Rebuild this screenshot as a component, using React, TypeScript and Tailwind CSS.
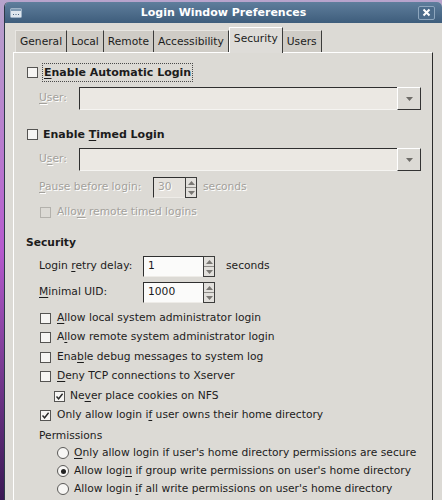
import React from 'react';

type Kids = { children: React.ReactNode };

// mnemonic letter
function U({ children }: Kids) {
  return <span className="underline decoration-1 underline-offset-[2px]">{children}</span>;
}

function Checkbox({ checked = false, off = false }: { checked?: boolean; off?: boolean }) {
  return (
    <div
      className={`flex h-[11px] w-[11px] shrink-0 items-center justify-center border ${
        off ? 'border-[#b3b1ac] bg-[#dcdad5]' : 'border-[#555452] bg-[#f6f5f3]'
      }`}
    >
      {checked && (
        <svg width="9" height="9" viewBox="0 0 9 9">
          <path d="M1.5 4.5 L3.6 6.8 L7.6 1.8" fill="none" stroke="#2a2a2a" strokeWidth="1.4" />
        </svg>
      )}
    </div>
  );
}

function Radio({ checked = false }: { checked?: boolean }) {
  return (
    <div className="flex h-[12px] w-[12px] shrink-0 items-center justify-center rounded-full border border-[#5a5957] bg-[#f7f6f4]">
      {checked && <div className="h-[5px] w-[5px] rounded-full bg-[#222]" />}
    </div>
  );
}

function Arrow({ up = false, color = '#6e6c68' }: { up?: boolean; color?: string }) {
  return (
    <svg width="7" height="4" viewBox="0 0 7 4">
      <path d={up ? 'M0 4 L3.5 0 L7 4 Z' : 'M0 0 L7 0 L3.5 4 Z'} fill={color} />
    </svg>
  );
}

function Combo() {
  return (
    <div className="flex h-[23px]">
      <div className="w-[318px] border-t border-l border-b border-t-[#2f2f2f] border-l-[#2f2f2f] border-b-[#f5f4f1] bg-[#ebe8e3]" />
      <div className="flex w-[24px] items-center justify-center border border-t-white border-l-white border-r-[#333] border-b-[#333] bg-[#dcdad5]">
        <Arrow />
      </div>
    </div>
  );
}

function Spin({ value, w, off = false }: { value: string; w: string; off?: boolean }) {
  return (
    <div className="flex h-[21px]">
      <div
        className={`${w} flex items-center border-t border-l border-b border-t-[#2f2f2f] border-l-[#2f2f2f] border-b-[#eeece8] pl-[4px] ${
          off ? 'bg-[#e4e1dc] text-[#a3a19c] [text-shadow:1px_1px_0_#fff]' : 'bg-[#fbfbfa]'
        }`}
      >
        {value}
      </div>
      <div className="flex w-[12px] flex-col border border-[#3d3d3c] bg-[#e2e0dc]">
        <div className="flex flex-1 items-center justify-center border-b border-[#8d8b87]">
          <Arrow up color="#7a7874" />
        </div>
        <div className="flex flex-1 items-center justify-center">
          <Arrow color="#7a7874" />
        </div>
      </div>
    </div>
  );
}

function Tab({ label, active = false }: { label: React.ReactNode; active?: boolean }) {
  if (active) {
    return (
      <div className="relative z-10 -mb-px flex h-[26px] items-center border-l border-t border-r border-l-white border-t-white border-r-[#3c3c3b] bg-[#dedcd8] px-[4px] pb-[3px]">
        {label}
      </div>
    );
  }
  return (
    <div className="flex h-[22px] items-center border-t border-r border-t-[#e8e6e2] border-r-[#3c3c3b] bg-[#cfccc6] px-[4px] pt-px">
      {label}
    </div>
  );
}

const off = 'text-[#a3a19c] [text-shadow:1px_1px_0_#fff]';

function CheckRow({ label, checked = false, pl = 'pl-[26px]', gap = 'gap-[6px]' }: { label: React.ReactNode; checked?: boolean; pl?: string; gap?: string }) {
  return (
    <div className={`flex h-[19.5px] items-center ${pl} ${gap}`}>
      <Checkbox checked={checked} />
      <span>{label}</span>
    </div>
  );
}

function RadioRow({ label, checked = false }: { label: React.ReactNode; checked?: boolean }) {
  return (
    <div className="flex h-[18px] items-center gap-[5px] pl-[43px]">
      <Radio checked={checked} />
      <span>{label}</span>
    </div>
  );
}

export default function App() {
  return (
    <div className="h-[500px] w-[442px] overflow-hidden bg-linear-to-b from-[#b7a4cc] via-[#b65ace] to-[#3a1854] pt-[2px] pl-[4px] font-['DejaVu_Sans',sans-serif] text-[10.7px] leading-none text-[#1c1c1c]">
      <div className="h-[560px] overflow-hidden rounded-t-[5px] border-l border-[#2c3a48] bg-[#dcdad5]">
        {/* title bar */}
        <div className="flex h-[21px] items-center bg-linear-to-b from-[#5f7e9c] to-[#3e5d7c]">
          <div className="w-[24px] pl-[5px]">
            <svg width="12" height="10" viewBox="0 0 12 10">
              <rect x="0.5" y="0.5" width="11" height="9" rx="1" fill="#dfe7ee" stroke="#9fb3c6" />
              <rect x="1" y="1" width="10" height="2" fill="#7f9ab3" />
              <rect x="3" y="6" width="1" height="1" fill="#4a6580" />
              <rect x="5.5" y="6" width="1" height="1" fill="#4a6580" />
              <rect x="8" y="6" width="1" height="1" fill="#4a6580" />
            </svg>
          </div>
          <div className="flex-1 text-center text-[11px] font-bold text-white">Login Window Preferences</div>
          <div className="w-[24px]">
            <div className="flex h-[14px] w-[17px] items-center justify-center rounded-[2px] border border-[#8ea6bd] bg-[#4c6c8b]">
              <svg width="9" height="9" viewBox="0 0 9 9">
                <path d="M1.5 1.5 L7.5 7.5 M7.5 1.5 L1.5 7.5" stroke="#fff" strokeWidth="2" />
              </svg>
            </div>
          </div>
        </div>

        <div className="pt-[4px] pl-[8px]">
          {/* notebook tabs */}
          <div className="flex h-[25px] items-end pl-[2px]">
            <div className="border-l border-l-[#e8e6e2]">
              <Tab label="General" />
            </div>
            <Tab label="Local" />
            <Tab label="Remote" />
            <Tab label="Accessibility" />
            <Tab label="Security" active />
            <Tab label="Users" />
          </div>

          {/* page */}
          <div className="h-[460px] w-[420px] border-t border-l border-r border-t-white border-l-white border-r-[#2b2b2b]">
            <div className="mt-[10px] flex h-[18px] items-center gap-[4px] pl-[13px]">
              <Checkbox />
              <span className="border border-dotted border-[#4a4a4a] px-[1px] py-[3px] text-[11px] font-bold">
                <U>E</U>nable Automatic Login
              </span>
            </div>
            <div className="mt-[6px] flex h-[23px] items-center pl-[25px]">
              <span className={`w-[40px] ${off}`}>
                <U>U</U>ser:
              </span>
              <Combo />
            </div>

            <div className="mt-[15px] flex h-[18px] items-center gap-[5px] pl-[13px]">
              <Checkbox />
              <span className="text-[11px] font-bold">
                Enable <U>T</U>imed Login
              </span>
            </div>
            <div className="mt-[5px] flex h-[23px] items-center pl-[25px]">
              <span className={`w-[40px] ${off}`}>
                U<U>s</U>er:
              </span>
              <Combo />
            </div>
            <div className="mt-[6px] flex h-[21px] items-center pl-[25px]">
              <span className={`w-[114px] ${off}`}>
                <U>P</U>ause before login:
              </span>
              <Spin value="30" w="w-[32px]" off />
              <span className={`ml-[6px] ${off}`}>seconds</span>
            </div>
            <div className="mt-[5px] flex h-[18px] items-center gap-[6px] pl-[26px]">
              <Checkbox off />
              <span className={off}>
                Allo<U>w</U> remote timed logins
              </span>
            </div>

            <div className="mt-[14px] flex h-[16px] items-center pl-[12px] font-bold">Security</div>
            <div className="mt-[5px] flex h-[21px] items-center pl-[25px]">
              <span className="w-[104px]">
                Login <U>r</U>etry delay:
              </span>
              <Spin value="1" w="w-[60px]" />
              <span className="ml-[11px]">seconds</span>
            </div>
            <div className="mt-[5px] flex h-[21px] items-center pl-[25px]">
              <span className="w-[104px]">
                <U>M</U>inimal UID:
              </span>
              <Spin value="1000" w="w-[60px]" />
            </div>

            <div className="mt-[5.5px]">
              <CheckRow label={<><U>A</U>llow local system administrator login</>} />
              <CheckRow label={<>A<U>l</U>low remote system administrator login</>} />
              <CheckRow label={<>Ena<U>b</U>le debug messages to system log</>} />
              <CheckRow label={<><U>D</U>eny TCP connections to Xserver</>} />
              <CheckRow checked pl="pl-[40px]" gap="gap-[5px]" label={<>Ne<U>v</U>er place cookies on NFS</>} />
              <CheckRow checked label={<>Only allow login i<U>f</U> user owns their home directory</>} />
            </div>

            <div className="mt-[2.5px] flex h-[16px] items-center pl-[25px]">Permissions</div>
            <RadioRow label={<><U>O</U>nly allow login if user's home directory permissions are secure</>} />
            <RadioRow checked label={<>Allow logi<U>n</U> if group write permissions on user's home directory</>} />
            <RadioRow label={<>Allow login <U>i</U>f all write permissions on user's home directory</>} />
          </div>
        </div>
      </div>
    </div>
  );
}
